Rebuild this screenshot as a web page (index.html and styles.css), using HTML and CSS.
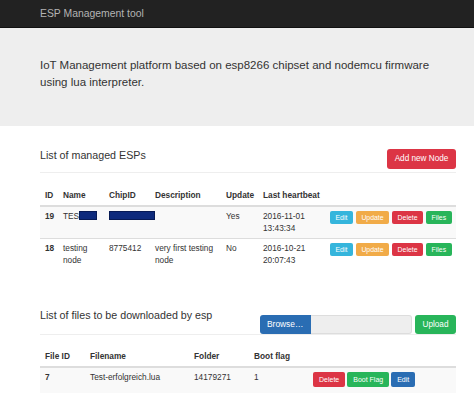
FILE: index.html
```html
<!DOCTYPE html>
<html lang="en">
<head>
    <meta charset="UTF-8">
    <meta name="viewport" content="width=device-width, initial-scale=1.0">
    <title>ESP Management tool</title>
    <link rel="stylesheet" href="styles.css">
</head>
<body>
    <nav class="navbar">
        <a class="brand" href="#">ESP Management tool</a>
    </nav>

    <div class="jumbotron">
        <p>IoT Management platform based on esp8266 chipset and nodemcu firmware using lua interpreter.</p>
    </div>

    <div class="container">
        <div class="page-header first">
            <h3>List of managed ESPs</h3>
            <button class="btn btn-danger add-btn">Add new Node</button>
        </div>

        <table class="table nodes">
            <thead>
                <tr>
                    <th class="w-id">ID</th>
                    <th class="w-name">Name</th>
                    <th class="w-chip">ChipID</th>
                    <th class="w-desc">Description</th>
                    <th class="w-upd">Update</th>
                    <th class="w-beat">Last heartbeat</th>
                    <th></th>
                </tr>
            </thead>
            <tbody>
                <tr>
                    <td><b>19</b></td>
                    <td>TES<span class="redact short"></span></td>
                    <td><span class="redact long"></span></td>
                    <td></td>
                    <td>Yes</td>
                    <td>2016-11-01 13:43:34</td>
                    <td class="actions">
                        <button class="btn btn-xs btn-info">Edit</button>
                        <button class="btn btn-xs btn-warning">Update</button>
                        <button class="btn btn-xs btn-danger">Delete</button>
                        <button class="btn btn-xs btn-success">Files</button>
                    </td>
                </tr>
                <tr>
                    <td><b>18</b></td>
                    <td>testing node</td>
                    <td>8775412</td>
                    <td>very first testing node</td>
                    <td>No</td>
                    <td>2016-10-21 20:07:43</td>
                    <td class="actions">
                        <button class="btn btn-xs btn-info">Edit</button>
                        <button class="btn btn-xs btn-warning">Update</button>
                        <button class="btn btn-xs btn-danger">Delete</button>
                        <button class="btn btn-xs btn-success">Files</button>
                    </td>
                </tr>
            </tbody>
        </table>

        <div class="page-header second">
            <h3>List of files to be downloaded by esp</h3>
            <form class="upload-form">
                <div class="file-group">
                    <span class="btn btn-primary browse">Browse&hellip;</span>
                    <span class="file-name"></span>
                </div>
                <button type="button" class="btn btn-success upload">Upload</button>
            </form>
        </div>

        <table class="table files">
            <thead>
                <tr>
                    <th class="w-fid">File ID</th>
                    <th class="w-fname">Filename</th>
                    <th class="w-folder">Folder</th>
                    <th class="w-boot">Boot flag</th>
                    <th></th>
                </tr>
            </thead>
            <tbody>
                <tr>
                    <td><b>7</b></td>
                    <td>Test-erfolgreich.lua</td>
                    <td>14179271</td>
                    <td>1</td>
                    <td class="actions">
                        <button class="btn btn-sm btn-danger">Delete</button>
                        <button class="btn btn-sm btn-success">Boot Flag</button>
                        <button class="btn btn-sm btn-primary">Edit</button>
                    </td>
                </tr>
            </tbody>
        </table>
    </div>
</body>
</html>
```

FILE: styles.css
```css
*{
    box-sizing: border-box;
}
body{
    margin: 0;
    background: #fff;
    color: #333;
    font-family: "Liberation Sans", Arial, Helvetica, sans-serif;
}

/* top bar */
.navbar{
    height: 28px;
    background: #222;
    border-bottom: 1px solid #111;
    padding-left: 40px;
    display: flex;
    align-items: center;
}
.brand{
    color: #b4b4b4;
    font-size: 10.4px;
    text-decoration: none;
}

.jumbotron{
    background: #eee;
    height: 98px;
    padding: 29px 18px 0 40px;
}
.jumbotron p{
    margin: 0;
    font-size: 11.5px;
    line-height: 17px;
    color: #333;
}

.container{
    padding: 0 18px 0 40px;
}

.page-header{
    display: flex;
    justify-content: space-between;
    align-items: flex-start;
    border-bottom: 1px solid #eee;
}
.page-header h3{
    margin: 0;
    font-size: 10.7px;
    font-weight: normal;
    line-height: 20px;
}
.page-header.first{
    margin-top: 19px;
    padding-bottom: 3px;
}
.page-header.second{
    margin-top: 35px;
}

/* buttons */
.btn{
    display: inline-block;
    border: none;
    border-radius: 3px;
    color: #fff;
    font-family: inherit;
    font-size: 8.2px;
    line-height: 20px;
    height: 20px;
    padding: 0 6px;
    cursor: pointer;
}
.btn-xs{
    font-size: 6.9px;
    height: 13px;
    line-height: 13px;
    padding: 0 5.5px;
    border-radius: 2px;
}
.btn-sm{
    font-size: 7px;
    height: 15px;
    line-height: 15px;
    padding: 0 6px;
    border-radius: 2px;
}
.btn-danger{ background: #dc3545; }
.btn-info{ background: #35b5dc; }
.btn-warning{ background: #f1ab48; }
.btn-success{ background: #28b55a; }
.btn-primary{ background: #2a6db3; }

.add-btn{
    margin-top: 4px;
    width: 69px;
}

/* upload form */
.upload-form{
    display: flex;
    gap: 3px;
    margin-top: 10px;
}
.file-group{
    display: flex;
    height: 19px;
}
.browse{
    width: 51px;
    height: 19px;
    line-height: 19px;
    font-size: 8.4px;
    border-radius: 3px 0 0 3px;
    padding: 0 7px;
}
.file-name{
    width: 101px;
    background: #eee;
    border: 1px solid #ddd;
    border-left: none;
    border-radius: 0 3px 3px 0;
}
.upload{
    width: 41px;
    height: 19px;
    line-height: 19px;
    font-size: 8.2px;
    padding: 0;
}

/* tables */
.table{
    width: 100%;
    border-collapse: collapse;
    table-layout: fixed;
    font-size: 8.3px;
}
.table th{
    text-align: left;
    font-weight: bold;
    padding: 8px 5px 4px;
    line-height: 11px;
    border-bottom: 2px solid #ddd;
}
.table td{
    padding: 4px 5px;
    line-height: 11.5px;
    vertical-align: top;
    border-top: 1px solid #ddd;
}
.table tbody tr:nth-child(odd){
    background: #f9f9f9;
}
.table tbody tr:first-child td{
    border-top: none;
}
.nodes{
    margin-top: 9px;
}
.files{
    margin-top: 8px;
}
.actions{
    white-space: nowrap;
    font-size: 0;
}
.nodes .actions .btn{
    margin-right: 3px;
}
.files .actions .btn{
    margin-right: 2px;
}

.w-id{ width: 18px; }
.w-name{ width: 46px; }
.w-chip{ width: 46px; }
.w-desc{ width: 71px; }
.w-upd{ width: 37px; }
.w-beat{ width: 67px; }

.w-fid{ width: 45px; }
.w-fname{ width: 104px; }
.w-folder{ width: 60px; }
.w-boot{ width: 59px; }

.redact{
    display: inline-block;
    background: #0e2a7c;
    border: 1px solid #071a55;
    height: 9px;
    vertical-align: -1px;
}
.redact.short{ width: 18px; }
.redact.long{ width: 46px; }
```
